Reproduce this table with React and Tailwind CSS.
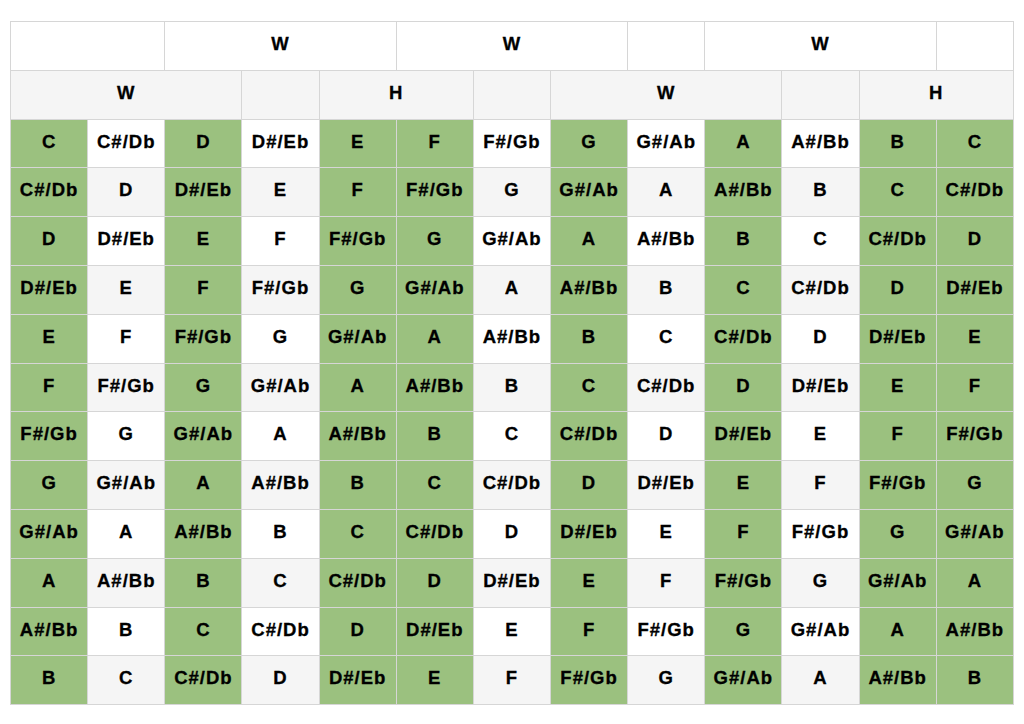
import React from 'react'

const notes = ['C', 'C#/Db', 'D', 'D#/Eb', 'E', 'F', 'F#/Gb', 'G', 'G#/Ab', 'A', 'A#/Bb', 'B']
const greenCols = [0, 2, 4, 5, 7, 9, 11, 12]

const topRow = [
    { span: 2, label: '' },
    { span: 3, label: 'W' },
    { span: 3, label: 'W' },
    { span: 1, label: '' },
    { span: 3, label: 'W' },
    { span: 1, label: '' },
]

const stepRow = [
    { span: 3, label: 'W' },
    { span: 1, label: '' },
    { span: 2, label: 'H' },
    { span: 1, label: '' },
    { span: 3, label: 'W' },
    { span: 1, label: '' },
    { span: 2, label: 'H' },
]

function App() {
    const cell = 'h-[48.8px] border border-[#d6d6d6] text-center align-middle pt-0 px-0 pb-[4px]'
    return (
        <div className='w-[1024px] h-[724px] bg-white pt-[21px] pl-[10px]' style={{ fontFamily: '"Liberation Sans", Arial, sans-serif' }}>
            <table className='w-[1004px] table-fixed border-collapse text-[18.5px] font-bold tracking-[1px] text-black [-webkit-text-stroke:0.3px_black]'>
                <tbody>
                    <tr className='bg-white'>
                        {topRow.map((c, i) => (
                            <td key={i} colSpan={c.span} className={cell}>{c.label}</td>
                        ))}
                    </tr>
                    <tr className='bg-[#f5f5f5]'>
                        {stepRow.map((c, i) => (
                            <td key={i} colSpan={c.span} className={cell}>{c.label}</td>
                        ))}
                    </tr>
                    {notes.map((_, r) => (
                        <tr key={r} className={r % 2 === 0 ? 'bg-white' : 'bg-[#f5f5f5]'}>
                            {Array.from({ length: 13 }).map((_, c) => (
                                <td key={c} className={`${cell} ${greenCols.includes(c) ? 'bg-[#9bc17f]' : ''}`}>
                                    {notes[(r + c) % 12]}
                                </td>
                            ))}
                        </tr>
                    ))}
                </tbody>
            </table>
        </div>
    )
}

export default App
